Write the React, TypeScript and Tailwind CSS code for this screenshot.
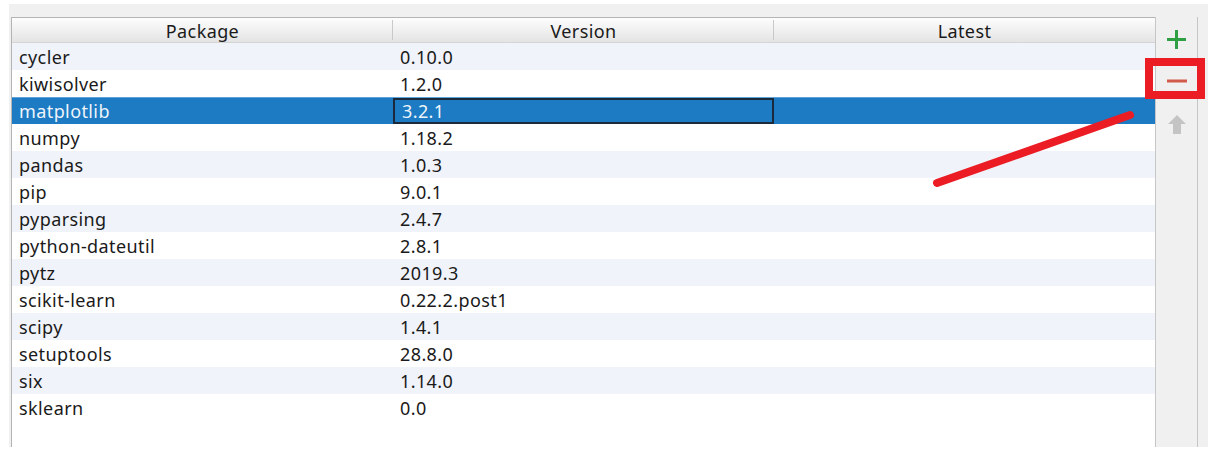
const packages: [string, string][] = [
  ["cycler", "0.10.0"],
  ["kiwisolver", "1.2.0"],
  ["matplotlib", "3.2.1"],
  ["numpy", "1.18.2"],
  ["pandas", "1.0.3"],
  ["pip", "9.0.1"],
  ["pyparsing", "2.4.7"],
  ["python-dateutil", "2.8.1"],
  ["pytz", "2019.3"],
  ["scikit-learn", "0.22.2.post1"],
  ["scipy", "1.4.1"],
  ["setuptools", "28.8.0"],
  ["six", "1.14.0"],
  ["sklearn", "0.0"],
];

const selected = 2;

function HeaderCell({ label, last }: { label: string; last?: boolean }) {
  return (
    <div className="relative flex items-center justify-center pt-[2px]">
      <span>{label}</span>
      {!last && <span className="absolute right-0 top-[2px] h-[20px] w-px bg-[#c9c9c9]" />}
    </div>
  );
}

export default function App() {
  return (
    <main
      className="relative h-[452px] w-[1223px] overflow-hidden bg-white pl-[9px] pt-[4px] text-[18px] tracking-[0.4px] text-[#1a1a1a]"
      style={{ fontFamily: '"Noto Sans", "Open Sans", sans-serif' }}
    >
      <div className="flex h-[443px] w-[1199px] bg-[#f0f0f0] pl-[2px] pt-[13px] pr-[10px]">
        <section className="flex w-[1144px] flex-col border-l border-t border-[#b4b4b4] bg-white">
          <div className="grid h-[25px] grid-cols-3 border-b border-[#d5d5d5] bg-gradient-to-b from-[#fdfdfd] to-[#e4e4e4] leading-none">
            <HeaderCell label="Package" />
            <HeaderCell label="Version" />
            <HeaderCell label="Latest" last />
          </div>
          {packages.map(([name, version], i) => {
            const isSel = i === selected;
            const bg = isSel
              ? "bg-[#1c7bc2] text-[#eef4fb] border-t border-[#5fa2d8]"
              : i % 2 === 0
                ? "bg-[#f0f3f9]"
                : "bg-white";
            return (
              <div key={name} className={`grid h-[27px] grid-cols-3 items-center leading-none ${bg}`}>
                <div className="pl-[7px]">{name}</div>
                <div
                  className={`flex h-full items-center pl-[7px] ${isSel ? "border-2 border-[#1b2a3a]" : ""}`}
                >
                  {version}
                </div>
                <div />
              </div>
            );
          })}
        </section>
        <aside className="flex w-[43px] flex-col items-center border-x border-[#c6c6c6] bg-[#f0f0f0] pt-[12px]">
          <svg width="21" height="21" viewBox="0 0 21 21">
            <path d="M10.5 1v19M1 10.5h19" stroke="#2ea043" strokeWidth="3" />
          </svg>
          <svg className="mt-[29px]" width="22" height="4" viewBox="0 0 22 4">
            <path d="M1 2h20" stroke="#d25a4c" strokeWidth="3" />
          </svg>
          <svg className="mt-[32px]" width="18" height="19" viewBox="0 0 18 19">
            <path d="M9 0L0 9h5v10h8V9h5z" fill="#c4c4c4" />
          </svg>
        </aside>
      </div>

      {/* red annotation drawn over the screenshot */}
      <svg className="pointer-events-none absolute left-0 top-0" width="1223" height="452">
        <rect x="1149" y="62" width="52" height="33" fill="none" stroke="#ec1c24" strokeWidth="8" />
        <path d="M1130 115L937 183" stroke="#ec1c24" strokeWidth="8" strokeLinecap="round" />
      </svg>
    </main>
  );
}
